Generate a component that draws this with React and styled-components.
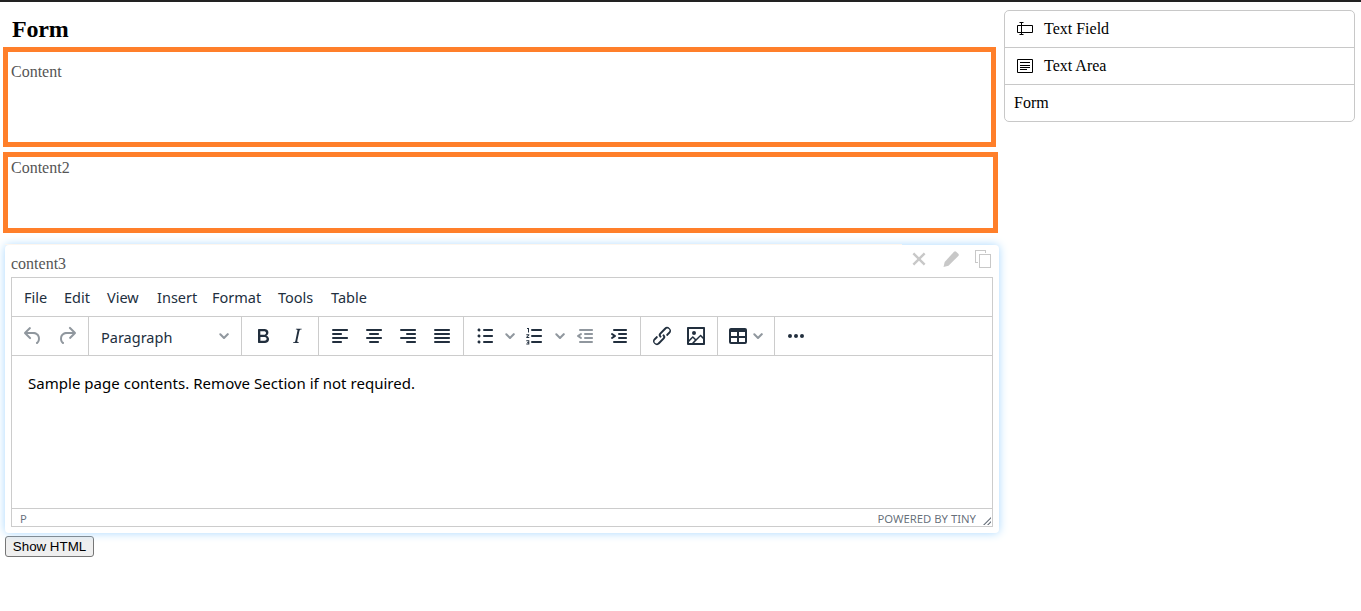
import React from 'react';
import styled, { createGlobalStyle } from 'styled-components';

const GlobalStyle = createGlobalStyle`
  html, body {
    margin: 0;
    padding: 0;
    background: #ffffff;
    font-family: "Liberation Serif", serif;
  }
  * {
    box-sizing: border-box;
  }
`;

const Page = styled.div`
  width: 1361px;
  height: 611px;
  overflow: hidden;
  border-top: 2px solid #222222;
  display: flex;
  align-items: flex-start;
`;

const Main = styled.div`
  width: 1001px;
  padding-left: 3px;
  flex-shrink: 0;
`;

const Title = styled.h2`
  margin: 0;
  height: 45px;
  padding: 14px 0 0 9px;
  font-size: 24px;
  line-height: 27px;
  font-weight: bold;
  letter-spacing: -0.2px;
  color: #000000;
`;

const Section = styled.div`
  width: ${({ $width }) => $width}px;
  height: ${({ $height }) => $height}px;
  margin-bottom: 5px;
  padding: ${({ $top }) => $top}px 3px 0;
  border: 5px solid #ff7f2a;
  font-size: 16px;
  line-height: 18px;
  color: #555555;
`;

const EditorSection = styled.div`
  position: relative;
  width: 994px;
  height: 288px;
  margin: 12px 0 0 2px;
  padding: 10px 6px 0;
  border-radius: 4px;
  background: #ffffff;
  box-shadow: 0 0 10px #a8d8ff;

  &::before {
    content: '';
    position: absolute;
    top: -1px;
    left: 0;
    width: 897px;
    height: 1px;
    background: #fdf6ef;
  }
`;

const EditorLabel = styled.div`
  height: 22px;
  font-size: 16px;
  line-height: 18px;
  color: #555555;
`;

const Actions = styled.div`
  position: absolute;
  top: 4px;
  right: 6px;
  display: flex;
  align-items: center;
  gap: 12px;
`;

const ActionIcon = styled.svg`
  width: 20px;
  height: 20px;
  fill: #c8c8c8;
  display: block;
`;

const Editor = styled.div`
  width: 982px;
  height: 250px;
  border: 1px solid #cccccc;
  display: flex;
  flex-direction: column;
  font-family: "Noto Sans", sans-serif;
  color: #222f3e;
`;

const MenuBar = styled.div`
  height: 39px;
  flex-shrink: 0;
  padding-left: 12px;
  display: flex;
  align-items: center;
  border-bottom: 1px solid #cccccc;
`;

const MenuItem = styled.span`
  width: ${({ $width }) => $width}px;
  flex-shrink: 0;
  font-size: 14.5px;
  color: #222f3e;
`;

const ToolBar = styled.div`
  height: 39px;
  flex-shrink: 0;
  display: flex;
  border-bottom: 1px solid #cccccc;
`;

const ToolGroup = styled.div`
  display: flex;
  align-items: center;
  padding: 0 ${({ $pad }) => ($pad === undefined ? 4 : $pad)}px;
  width: ${({ $width }) => $width}px;
  flex-shrink: 0;
  border-right: ${({ $last }) => ($last ? 'none' : '1px solid #cccccc')};
`;

const ToolButton = styled.div`
  width: 34px;
  height: 34px;
  flex-shrink: 0;
  display: flex;
  align-items: center;
  justify-content: center;
`;

const ToolIcon = styled.svg`
  width: 24px;
  height: 24px;
  display: block;
  fill: ${({ $muted }) => ($muted ? 'rgba(34, 47, 62, 0.5)' : '#222f3e')};
`;

const CaretSlot = styled.div`
  width: ${({ $width }) => $width}px;
  flex-shrink: 0;
  display: flex;
  justify-content: center;
`;

const Chevron = styled.svg`
  width: 10px;
  height: 6px;
  display: block;
  flex-shrink: 0;
  fill: rgba(34, 47, 62, 0.5);
`;

const FormatSelect = styled.div`
  width: 143px;
  height: 34px;
  padding: 0 7px 0 8px;
  display: flex;
  align-items: center;
  justify-content: space-between;
  font-size: 14.5px;
`;

const FormatLabel = styled.span`
  padding-top: 2px;
`;

const Content = styled.div`
  flex: 1;
  padding: 15px 16px;
  font-size: 15px;
  line-height: 24px;
  letter-spacing: 0.03px;
  color: #000000;
`;

const StatusBar = styled.div`
  height: 18px;
  flex-shrink: 0;
  padding: 1px 16px 0 8px;
  position: relative;
  display: flex;
  align-items: center;
  justify-content: space-between;
  border-top: 1px solid #cccccc;
  font-size: 11.3px;
  color: rgba(34, 47, 62, 0.7);
`;

const ResizeHandle = styled.svg`
  position: absolute;
  right: 0;
  bottom: 0;
  width: 10px;
  height: 10px;
  fill: rgba(34, 47, 62, 0.7);
`;

const ShowHtml = styled.button`
  display: block;
  width: 89px;
  height: 21px;
  margin: 3px 0 0 2px;
  padding: 0;
  font-family: "Liberation Sans", sans-serif;
  font-size: 13.33px;
  color: #000000;
  background: #efefef;
  border: 1px solid #767676;
  border-radius: 3px;
`;

const Sidebar = styled.div`
  width: 351px;
  margin: 8px 0 0 3px;
  border: 1px solid #c8c8c8;
  border-radius: 5px;
  flex-shrink: 0;
`;

const SideItem = styled.div`
  height: ${({ $last }) => ($last ? 36 : 37)}px;
  display: flex;
  align-items: center;
  gap: 10px;
  padding-left: ${({ $plain }) => ($plain ? 9 : 12)}px;
  font-size: 16px;
  color: #000000;
  border-bottom: ${({ $last }) => ($last ? 'none' : '1px solid #c8c8c8')};
`;

const SideIcon = styled.svg`
  width: 17px;
  height: 17px;
  fill: none;
  stroke: #000000;
  stroke-width: 1;
  display: block;
`;

const icons = {
  undo: 'M6.4 8H12c3.7 0 6.2 2 6.8 5.1.6 2.7-.4 5.6-2.3 6.8a1 1 0 0 1-1-1.8c1.1-.6 1.8-2.7 1.4-4.6-.5-2.1-2.1-3.5-4.9-3.5H6.4l3.3 3.3a1 1 0 1 1-1.4 1.4l-5-5a1 1 0 0 1 0-1.4l5-5a1 1 0 0 1 1.4 1.4L6.4 8Z',
  redo: 'M17.6 10H12c-2.8 0-4.4 1.4-4.9 3.5-.4 2 .3 4 1.4 4.6a1 1 0 1 1-1 1.8c-2-1.2-2.9-4.1-2.3-6.8.6-3 3-5.1 6.8-5.1h5.6l-3.3-3.3a1 1 0 1 1 1.4-1.4l5 5a1 1 0 0 1 0 1.4l-5 5a1 1 0 0 1-1.4-1.4l3.3-3.3Z',
  bold: 'M7.8 19c-.3 0-.5 0-.6-.2l-.2-.5V5.7c0-.2 0-.4.2-.5l.6-.2h5c1.5 0 2.7.3 3.5 1 .7.6 1.1 1.4 1.1 2.5a3 3 0 0 1-.6 1.9c-.4.6-1 1-1.6 1.2.4.1.9.3 1.3.6s.8.7 1 1.2c.4.4.5 1 .5 1.6 0 1.3-.4 2.3-1.3 3-.8.7-2.1 1-3.8 1H7.8Zm5-8.3c.6 0 1.2-.1 1.6-.5.4-.3.6-.7.6-1.3 0-1.1-.8-1.7-2.3-1.7H9.3v3.5h3.4Zm.5 6c.7 0 1.3-.1 1.7-.4.4-.4.6-.9.6-1.5s-.2-1-.7-1.4c-.4-.3-1-.4-2-.4H9.4v3.8h4Z',
  italic: 'm16.7 4.7-.1.9h-.3c-.6 0-1 0-1.4.3-.3.3-.4.6-.5 1.1l-2.1 9.8v.6c0 .5.4.8 1.4.8h.2l-.2.8H8l.2-.8h.2c1.1 0 1.8-.5 2-1.5l2-9.8.1-.5c0-.6-.4-.8-1.4-.8h-.3l.2-.9h5.8Z',
  alignLeft: 'M5 5h14c.6 0 1 .4 1 1s-.4 1-1 1H5a1 1 0 1 1 0-2Zm0 4h8c.6 0 1 .4 1 1s-.4 1-1 1H5a1 1 0 1 1 0-2Zm0 8h8c.6 0 1 .4 1 1s-.4 1-1 1H5a1 1 0 0 1 0-2Zm0-4h14c.6 0 1 .4 1 1s-.4 1-1 1H5a1 1 0 0 1 0-2Z',
  alignCenter: 'M5 5h14c.6 0 1 .4 1 1s-.4 1-1 1H5a1 1 0 1 1 0-2Zm3 4h8c.6 0 1 .4 1 1s-.4 1-1 1H8a1 1 0 1 1 0-2Zm0 8h8c.6 0 1 .4 1 1s-.4 1-1 1H8a1 1 0 0 1 0-2Zm-3-4h14c.6 0 1 .4 1 1s-.4 1-1 1H5a1 1 0 0 1 0-2Z',
  alignRight: 'M5 5h14c.6 0 1 .4 1 1s-.4 1-1 1H5a1 1 0 1 1 0-2Zm6 4h8c.6 0 1 .4 1 1s-.4 1-1 1h-8a1 1 0 0 1 0-2Zm0 8h8c.6 0 1 .4 1 1s-.4 1-1 1h-8a1 1 0 0 1 0-2Zm-6-4h14c.6 0 1 .4 1 1s-.4 1-1 1H5a1 1 0 0 1 0-2Z',
  justify: 'M5 5h14c.6 0 1 .4 1 1s-.4 1-1 1H5a1 1 0 1 1 0-2Zm0 4h14c.6 0 1 .4 1 1s-.4 1-1 1H5a1 1 0 1 1 0-2Zm0 4h14c.6 0 1 .4 1 1s-.4 1-1 1H5a1 1 0 0 1 0-2Zm0 4h14c.6 0 1 .4 1 1s-.4 1-1 1H5a1 1 0 0 1 0-2Z',
  bullets: 'M11 5h8c.6 0 1 .4 1 1s-.4 1-1 1h-8a1 1 0 0 1 0-2Zm0 6h8c.6 0 1 .4 1 1s-.4 1-1 1h-8a1 1 0 0 1 0-2Zm0 6h8c.6 0 1 .4 1 1s-.4 1-1 1h-8a1 1 0 0 1 0-2ZM4.5 6c0-.4.1-.8.4-1 .3-.4.7-.5 1.1-.5.4 0 .8.1 1 .4.4.3.5.7.5 1.1 0 .4-.1.8-.4 1-.3.4-.7.5-1.1.5-.4 0-.8-.1-1-.4-.4-.3-.5-.7-.5-1.1Zm0 6c0-.4.1-.8.4-1 .3-.4.7-.5 1.1-.5.4 0 .8.1 1 .4.4.3.5.7.5 1.1 0 .4-.1.8-.4 1-.3.4-.7.5-1.1.5-.4 0-.8-.1-1-.4-.4-.3-.5-.7-.5-1.1Zm0 6c0-.4.1-.8.4-1 .3-.4.7-.5 1.1-.5.4 0 .8.1 1 .4.4.3.5.7.5 1.1 0 .4-.1.8-.4 1-.3.4-.7.5-1.1.5-.4 0-.8-.1-1-.4-.4-.3-.5-.7-.5-1.1Z',
  numbers: 'M10 17h9c.6 0 1 .4 1 1s-.4 1-1 1h-9a1 1 0 0 1 0-2Zm0-6h9c.6 0 1 .4 1 1s-.4 1-1 1h-9a1 1 0 0 1 0-2Zm0-6h9c.6 0 1 .4 1 1s-.4 1-1 1h-9a1 1 0 1 1 0-2ZM5 4h2v4.5H6V5H5V4Zm-.7 6.2h3v1L5.5 13h1.8v1h-3v-1l1.8-1.8H4.3v-1Zm0 6h3v4.3h-3v-1h2v-.7H5v-.9h1.3v-.7h-2v-1Z',
  outdent: 'M7 5h12c.6 0 1 .4 1 1s-.4 1-1 1H7a1 1 0 1 1 0-2Zm5 4h7c.6 0 1 .4 1 1s-.4 1-1 1h-7a1 1 0 0 1 0-2Zm0 4h7c.6 0 1 .4 1 1s-.4 1-1 1h-7a1 1 0 0 1 0-2Zm-5 4h12a1 1 0 0 1 0 2H7a1 1 0 0 1 0-2Zm1.6-3.8a1 1 0 0 1-1.2 1.6l-3-2a1 1 0 0 1 0-1.6l3-2a1 1 0 0 1 1.2 1.6L6.8 12l1.8 1.2Z',
  indent: 'M7 5h12c.6 0 1 .4 1 1s-.4 1-1 1H7a1 1 0 1 1 0-2Zm5 4h7c.6 0 1 .4 1 1s-.4 1-1 1h-7a1 1 0 0 1 0-2Zm0 4h7c.6 0 1 .4 1 1s-.4 1-1 1h-7a1 1 0 0 1 0-2Zm-5 4h12a1 1 0 0 1 0 2H7a1 1 0 0 1 0-2Zm-2.6-3.8L6.2 12l-1.8-1.2a1 1 0 0 1 1.2-1.6l3 2a1 1 0 0 1 0 1.6l-3 2a1 1 0 1 1-1.2-1.6Z',
  link: 'M6.2 12.3a1 1 0 0 1 1.4 1.4l-2 2a2 2 0 1 0 2.6 2.8l4.8-4.8a1 1 0 0 0 0-1.4 1 1 0 1 1 1.4-1.3 2.9 2.9 0 0 1 0 4L9.6 20a3.9 3.9 0 0 1-5.5-5.5l2-2Zm11.6-.6a1 1 0 0 1-1.4-1.4l2-2a2 2 0 1 0-2.6-2.8L11 10.3a1 1 0 0 0 0 1.4A1 1 0 1 1 9.6 13a2.9 2.9 0 0 1 0-4L14.4 4a3.9 3.9 0 0 1 5.5 5.5l-2 2Z',
  image: 'm5 15.7 3.3-3.2c.3-.3.7-.3 1 0L12 15l4.1-4c.3-.4.8-.4 1 0l2 1.9V5H5v10.7ZM5 18V19h3l2.8-2.9-2-2L5 17.9Zm14-3-2.5-2.4-6.4 6.5H19v-4ZM4 3h16c.6 0 1 .4 1 1v16c0 .6-.4 1-1 1H4a1 1 0 0 1-1-1V4c0-.6.4-1 1-1Zm6 8a2 2 0 1 0 0-4 2 2 0 0 0 0 4Z',
  table: 'M19 4a2 2 0 0 1 2 2v12a2 2 0 0 1-2 2H5a2 2 0 0 1-2-2V6c0-1.1.9-2 2-2h14ZM5 14v4h6v-4H5Zm14 0h-6v4h6v-4Zm0-6h-6v4h6V8ZM5 12h6V8H5v4Z',
  more: 'M6 10a2 2 0 0 0-2 2c0 1.1.9 2 2 2a2 2 0 0 0 2-2 2 2 0 0 0-2-2Zm12 0a2 2 0 0 0-2 2c0 1.1.9 2 2 2a2 2 0 0 0 2-2 2 2 0 0 0-2-2Zm-6 0a2 2 0 0 0-2 2c0 1.1.9 2 2 2a2 2 0 0 0 2-2 2 2 0 0 0-2-2Z',
};

const menus = [
  ['File', 40],
  ['Edit', 43],
  ['View', 50],
  ['Insert', 55],
  ['Format', 66],
  ['Tools', 53],
  ['Table', 50],
];

function Tool({ name, muted }) {
  return (
    <ToolButton>
      <ToolIcon viewBox="0 0 24 24" $muted={muted}>
        <path d={icons[name]} />
      </ToolIcon>
    </ToolButton>
  );
}

function Caret() {
  return (
    <Chevron viewBox="0 0 10 6">
      <path d="M.6.6a1 1 0 0 1 1.4 0l3 3 3-3a1 1 0 1 1 1.4 1.4l-3.7 3.7a1 1 0 0 1-1.4 0L.6 2A1 1 0 0 1 .6.6Z" />
    </Chevron>
  );
}

function App() {
  return (
    <>
      <GlobalStyle />
      <Page>
        <Main>
          <Title>Form</Title>
          <Section $width={993} $height={100} $top={11}>
            Content
          </Section>
          <Section $width={995} $height={81} $top={2}>
            Content2
          </Section>
          <EditorSection>
            <Actions>
              <ActionIcon viewBox="0 0 20 20">
                <path d="M5.2 3.5 10 8.3l4.8-4.8 1.7 1.7-4.8 4.8 4.8 4.8-1.7 1.7-4.8-4.8-4.8 4.8-1.7-1.7L8.3 10 3.5 5.2Z" />
              </ActionIcon>
              <ActionIcon viewBox="0 0 20 20">
                <path d="M13 2.7a1.6 1.6 0 0 1 2.2 0l2.1 2.1a1.6 1.6 0 0 1 0 2.2l-9.8 9.8-5 1.2 1.2-5Z" />
              </ActionIcon>
              <ActionIcon viewBox="0 0 20 20">
                <path d="M2 1h11v3h-1V2H3v11h2v1H2Zm4 4h12v14H6Zm1 1v12h10V6Z" />
              </ActionIcon>
            </Actions>
            <EditorLabel>content3</EditorLabel>
            <Editor>
              <MenuBar>
                {menus.map(([label, width]) => (
                  <MenuItem key={label} $width={width}>
                    {label}
                  </MenuItem>
                ))}
              </MenuBar>
              <ToolBar>
                <ToolGroup $width={77}>
                  <Tool name="undo" muted />
                  <Tool name="redo" muted />
                </ToolGroup>
                <ToolGroup $width={153}>
                  <FormatSelect>
                    <FormatLabel>Paragraph</FormatLabel>
                    <Caret />
                  </FormatSelect>
                </ToolGroup>
                <ToolGroup $width={77}>
                  <Tool name="bold" />
                  <Tool name="italic" />
                </ToolGroup>
                <ToolGroup $width={145}>
                  <Tool name="alignLeft" />
                  <Tool name="alignCenter" />
                  <Tool name="alignRight" />
                  <Tool name="justify" />
                </ToolGroup>
                <ToolGroup $width={177}>
                  <Tool name="bullets" />
                  <CaretSlot $width={15}>
                    <Caret />
                  </CaretSlot>
                  <Tool name="numbers" />
                  <CaretSlot $width={17}>
                    <Caret />
                  </CaretSlot>
                  <Tool name="outdent" muted />
                  <Tool name="indent" />
                </ToolGroup>
                <ToolGroup $width={77}>
                  <Tool name="link" />
                  <Tool name="image" />
                </ToolGroup>
                <ToolGroup $width={57} $pad={3}>
                  <Tool name="table" />
                  <CaretSlot $width={5}>
                    <Caret />
                  </CaretSlot>
                </ToolGroup>
                <ToolGroup $last>
                  <Tool name="more" />
                </ToolGroup>
              </ToolBar>
              <Content>Sample page contents. Remove Section if not required.</Content>
              <StatusBar>
                <span>P</span>
                <span>POWERED BY TINY</span>
                <ResizeHandle viewBox="0 0 10 10">
                  <path d="M9 1 1 9h1.5L9 2.5ZM9 5 5 9h1.5L9 6.5Z" />
                </ResizeHandle>
              </StatusBar>
            </Editor>
          </EditorSection>
          <ShowHtml type="button">Show HTML</ShowHtml>
        </Main>
        <Sidebar>
          <SideItem>
            <SideIcon viewBox="0 0 17 17">
              <path d="M.5 4.5h15v7H.5ZM4.5 1.5v12M2.5 1.5h4M2.5 13.5h4" />
            </SideIcon>
            Text Field
          </SideItem>
          <SideItem>
            <SideIcon viewBox="0 0 17 17">
              <path d="M.5 1.5h15v13H.5ZM3 4.5h10M3 7.5h10M3 9.5h10M3 11.5h7" />
            </SideIcon>
            Text Area
          </SideItem>
          <SideItem $plain $last>
            Form
          </SideItem>
        </Sidebar>
      </Page>
    </>
  );
}

export default App;
